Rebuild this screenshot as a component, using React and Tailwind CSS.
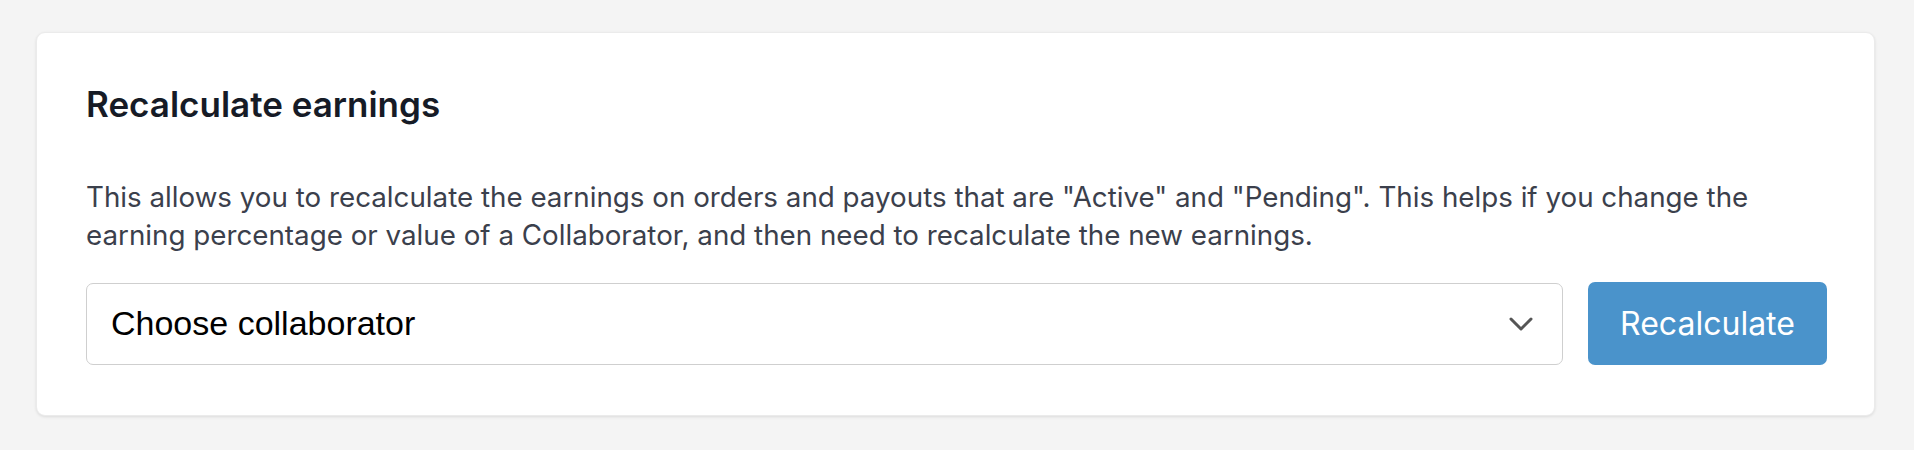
import React from 'react';

const Chevron = () => (
  <svg width="24" height="14" viewBox="0 0 24 14" fill="none" className="shrink-0">
    <path d="M2 2l10 10L22 2" stroke="#555" strokeWidth="3" strokeLinecap="round" strokeLinejoin="round" />
  </svg>
);

const App = () => {
  return (
    <div className="min-h-[450px] bg-[#f4f4f4] pl-[36px] pr-[39px] pt-[32px] font-['Inter',sans-serif]">
      <div className="rounded-[9px] border border-[#ebebeb] bg-white pl-[49px] pr-[47px] pt-[51px] pb-[50px] shadow-[0_1px_3px_rgba(0,0,0,0.10)]">
        <h2 className="text-[35px] font-semibold leading-[40px] text-[#161b26]">Recalculate earnings</h2>
        <p className="mt-[55px] text-[27.75px] leading-[37.5px] text-[#3b404c]">
          This allows you to recalculate the earnings on orders and payouts that are "Active" and "Pending". This helps
          if you change the earning percentage or value of a Collaborator, and then need to recalculate the new
          earnings.
        </p>
        <div className="mt-[28px] flex items-center gap-[25px]">
          <div className="flex h-[82px] flex-1 items-center justify-between rounded-[7px] border border-[#cfcfcf] bg-white pl-[24px] pr-[29px]">
            <span className="font-['Liberation_Sans',Arial,sans-serif] text-[34px] text-black">Choose collaborator</span>
            <Chevron />
          </div>
          <button className="h-[83px] w-[239px] rounded-[7px] bg-[#4a93cb] text-[32px] text-white">Recalculate</button>
        </div>
      </div>
    </div>
  );
};

export default App;
